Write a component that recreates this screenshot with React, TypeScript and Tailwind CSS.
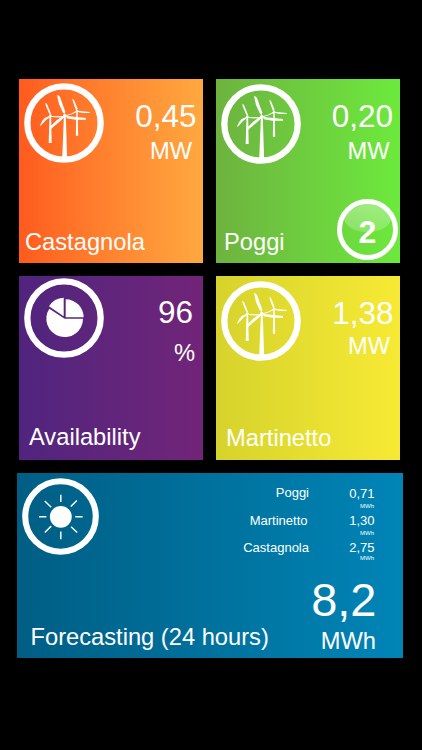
import type { ReactNode } from "react";

function Ring({ children, className = "" }: { children: ReactNode; className?: string }) {
  return (
    <svg viewBox="0 0 240 240" className={`block shrink-0 ${className}`} fill="#fff">
      <circle cx="120" cy="120" r="110" fill="none" stroke="#fff" strokeWidth="19" />
      {children}
    </svg>
  );
}

function WindIcon() {
  return (
    <Ring className="h-20 w-20">
      {/* left turbine */}
      <path d="M76.500 100h5l1.500 80h-9z" />
      <path d="M64 59q4 1 6 6l11 27-3 2-3-3-10-24z" />
      <path d="M76 99l2 4-11 7-17 18-2-1 7-14 7-8z" />
      <path d="M82 99l36 1v4l-35-2z" />
      <circle cx="79" cy="98" r="4" />
      {/* right turbine */}
      <path d="M157 88h4l1.500 70h-7z" />
      <path d="M145 47q4 1 6 6l10 25-3 4-3-3-8-23z" />
      <path d="M161 83l36 4v3l-20 0-15-3z" />
      <path d="M156 84l1 4-14 6-15 5-1-3 14-4z" />
      <circle cx="159" cy="85" r="4" />
      {/* front turbine */}
      <path d="M119.500 104h6l4 125h-15z" />
      <path d="M99 36q5 0 9 6l16 44-2 7-5-4-12-26z" />
      <path d="M128 99l58 6v5h-32l-26-4z" />
      <path d="M117 99l3 5-17 15-25 21h-3l3-9 21-20z" />
      <circle cx="122.500" cy="99" r="6" />
    </Ring>
  );
}

function PieIcon() {
  return (
    <Ring className="h-20 w-20">
      <path d="M125 118V64a54 54 0 0 1 54 54z" />
      <path d="M119 115L75 85a53 53 0 0 1 44-26z" />
      <path d="M122 122h55a55 55 0 1 1-101-30z" />
    </Ring>
  );
}

function SunIcon() {
  return (
    <Ring className="h-[77px] w-[77px]">
      <circle cx="121" cy="121" r="34" />
      <path
        d="M121 52v23M121 167v24M53 121h23M166 121h23M71 72l20 19M171 70l-19 19M71 170l20-20M153 152l19 18"
        stroke="#fff"
        strokeWidth="4.500"
      />
    </Ring>
  );
}

interface TileProps {
  background: string;
  iconPlace: string;
  icon: ReactNode;
  value: string;
  valuePlace: string;
  unit: string;
  unitPlace: string;
  label: string;
  labelPlace: string;
  children?: ReactNode;
}

function Tile(p: TileProps) {
  return (
    <section className={`relative flex h-[184px] w-[184px] flex-col justify-between bg-linear-to-r ${p.background}`}>
      <div className="flex items-start justify-between">
        <div className={p.iconPlace}>{p.icon}</div>
        <div className="flex flex-col items-end">
          <span className={`text-[31.5px] leading-[32px] ${p.valuePlace}`}>{p.value}</span>
          <span className={`text-[23.7px] leading-[24px] ${p.unitPlace}`}>{p.unit}</span>
        </div>
      </div>
      <h2 className={`text-[23.7px] leading-[24px] ${p.labelPlace}`}>{p.label}</h2>
      {p.children}
    </section>
  );
}

function AlertBadge({ count }: { count: number }) {
  return (
    <div className="absolute right-[2px] bottom-[3px] flex h-[61px] w-[61px] items-center justify-center overflow-hidden rounded-full border-[5px] border-white">
      <div className="absolute top-0 h-[28px] w-[47px] rounded-[50%] bg-linear-to-b from-white/35 to-white/20" />
      <span className="relative pt-[4px] text-[32px] leading-none font-bold">{count}</span>
    </div>
  );
}

interface ForecastRowProps {
  name: string;
  value: string;
  className: string;
  nameClass: string;
  unitClass: string;
}

function ForecastRow({ name, value, className, nameClass, unitClass }: ForecastRowProps) {
  return (
    <div className={`flex items-start justify-end text-[13px] leading-none ${className}`}>
      <span className={nameClass}>{name}</span>
      <div className="flex w-[67px] flex-col items-end pr-[1.5px]">
        <span>{value}</span>
        <span className={`pr-[0.5px] text-[6px] leading-none ${unitClass}`}>MWh</span>
      </div>
    </div>
  );
}

export default function App() {
  return (
    <main className="flex h-[750px] w-[422px] flex-col bg-black pt-[79px] font-['Liberation_Sans',Arial,sans-serif] text-white">
      <div className="ml-[19px] grid grid-cols-[184px_184px] gap-[13px]">
        <Tile
          background="from-[#ff5a1e] to-[#ffa840]"
          icon={<WindIcon />}
          iconPlace="pt-[4px] pl-[5px]"
          value="0,45"
          valuePlace="mt-[21px] mr-[6.5px]"
          unit="MW"
          unitPlace="mt-[7px] mr-[11px]"
          label="Castagnola"
          labelPlace="mb-[9px] ml-[6px]"
        />
        <Tile
          background="from-[#6db33f] to-[#6cea3c]"
          icon={<WindIcon />}
          iconPlace="pt-[5px] pl-[5px]"
          value="0,20"
          valuePlace="mt-[21px] mr-[7px]"
          unit="MW"
          unitPlace="mt-[7px] mr-[10.5px]"
          label="Poggi"
          labelPlace="mb-[9px] ml-[8px]"
        >
          <AlertBadge count={2} />
        </Tile>
        <Tile
          background="from-[#50247e] to-[#712478]"
          icon={<PieIcon />}
          iconPlace="pt-[2px] pl-[5px]"
          value="96"
          valuePlace="mt-[20px] mr-[10px]"
          unit="%"
          unitPlace="mt-[13px] mr-[8px]"
          label="Availability"
          labelPlace="mb-[11px] ml-[10px]"
        />
        <Tile
          background="from-[#d6d32c] to-[#f7ea34]"
          icon={<WindIcon />}
          iconPlace="pt-[5px] pl-[5px]"
          value="1,38"
          valuePlace="mt-[21px] mr-[6.5px]"
          unit="MW"
          unitPlace="mt-[5px] mr-[10px]"
          label="Martinetto"
          labelPlace="mb-[10px] ml-[10px]"
        />
      </div>
      <section className="mt-[13px] ml-[17px] flex h-[184.5px] w-[386px] justify-between bg-linear-to-r from-[#005e84] to-[#0085b7]">
        <div className="flex w-[200px] shrink-0 flex-col justify-between">
          <div className="pt-[5px] pl-[5px]">
            <SunIcon />
          </div>
          <h2 className="mb-[9px] ml-[13.5px] text-[23.7px] leading-[24px] whitespace-nowrap">Forecasting (24 hours)</h2>
        </div>
        <div className="flex flex-col pt-[14px] pr-[27px]">
          <ForecastRow name="Poggi" value="0,71" className="h-[27px]" nameClass="-mt-px" unitClass="mt-[3px]" />
          <ForecastRow name="Martinetto" value="1,30" className="h-[27px]" nameClass="pr-[1.5px]" unitClass="mt-[3px]" />
          <ForecastRow name="Castagnola" value="2,75" className="h-[35px]" nameClass="" unitClass="mt-[1px]" />
          <span className="-mr-[0.5px] text-right text-[47px] leading-[48px]">8,2</span>
          <span className="mt-[5px] text-right text-[23.7px] leading-[24px]">MWh</span>
        </div>
      </section>
    </main>
  );
}
